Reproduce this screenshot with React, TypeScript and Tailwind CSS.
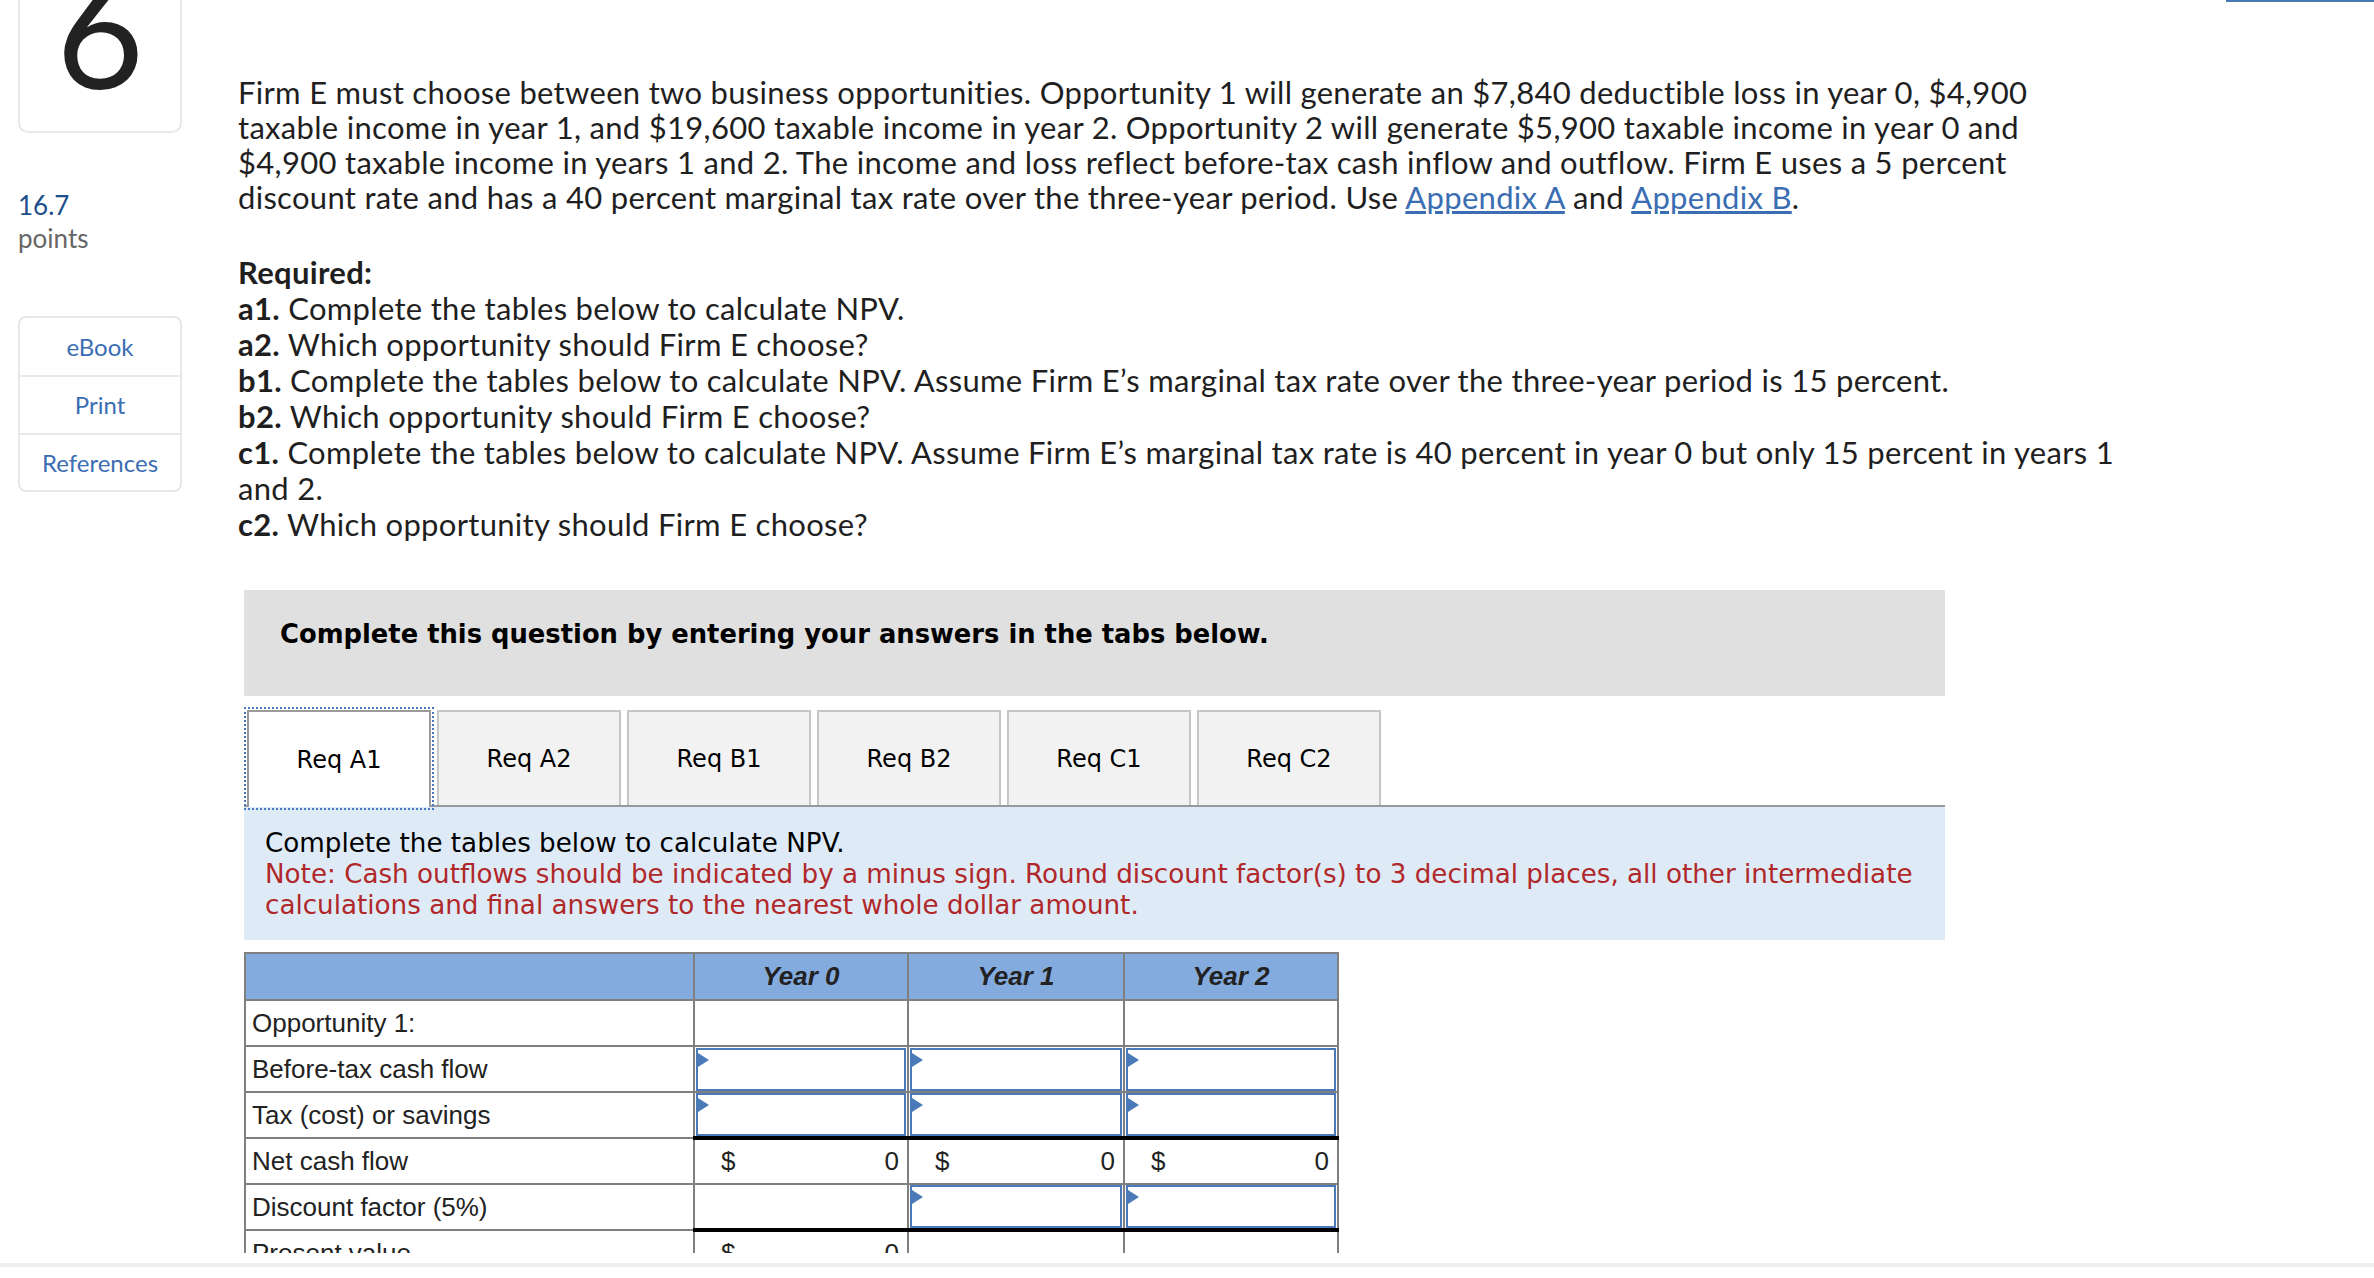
import React from 'react';

const tabs = ['Req A1', 'Req A2', 'Req B1', 'Req B2', 'Req C1', 'Req C2'];

const bodyFont = { fontFamily: 'Lato, "Open Sans", sans-serif' };
const verdana = { fontFamily: '"DejaVu Sans", Verdana, sans-serif' };
const arial = { fontFamily: '"Liberation Sans", Arial, sans-serif' };

// Blue answer box with the small flag in the corner
const InputCell = () => (
  <div className="relative h-[43px] mx-[1px] border-2 border-[#4a7ab8] bg-white">
    <div className="absolute left-0 top-[3px] w-0 h-0 border-t-[7px] border-b-[7px] border-l-[11px] border-t-transparent border-b-transparent border-l-[#4a7ab8]" />
  </div>
);

const MoneyCell = ({ value }: { value: string }) => (
  <div className="flex justify-between items-center pl-[26px] pr-[8px]">
    <span>$</span>
    <span>{value}</span>
  </div>
);

type Row = {
  label: string;
  cells: Array<'empty' | 'input' | 'money'>;
  thick?: boolean;
};

const rows: Row[] = [
  { label: 'Opportunity 1:', cells: ['empty', 'empty', 'empty'] },
  { label: 'Before-tax cash flow', cells: ['input', 'input', 'input'] },
  { label: 'Tax (cost) or savings', cells: ['input', 'input', 'input'], thick: true },
  { label: 'Net cash flow', cells: ['money', 'money', 'money'] },
  { label: 'Discount factor (5%)', cells: ['empty', 'input', 'input'], thick: true },
  { label: 'Present value', cells: ['money', 'empty', 'empty'] },
];

export default function App() {
  return (
    <div className="w-[2374px] h-[1278px] bg-white flex flex-col relative text-[#1f1f1f]" style={bodyFont}>
      <div className="absolute top-0 right-0 w-[148px] h-[2px] bg-[#4a78b5]" />

      <div className="h-[1253px] overflow-hidden flex">
        {/* Left rail */}
        <div className="w-[164px] ml-[18px] shrink-0 flex flex-col">
          <div className="h-[133px] border-2 border-t-0 border-[#e8e8e8] rounded-b-[10px] flex justify-center overflow-hidden">
            <span className="text-[152px] leading-none mt-[-46px] text-[#222]">6</span>
          </div>
          <div className="mt-[56px] text-[26px] leading-[33px] text-[#1d4f8c]">16.7</div>
          <div className="text-[26px] leading-[33px] text-[#666]">points</div>
          <div className="mt-[61px] border-2 border-[#e8e8e8] rounded-[8px] flex flex-col text-[24px] text-[#3b6db3]">
            <div className="h-[59px] flex items-center justify-center border-b-2 border-[#e8e8e8]">eBook</div>
            <div className="h-[58px] flex items-center justify-center border-b-2 border-[#e8e8e8]">Print</div>
            <div className="h-[55px] flex items-center justify-center">References</div>
          </div>
        </div>

        {/* Question */}
        <div className="ml-[56px] flex-1 flex flex-col">
          <p className="mt-[75px] text-[31px] leading-[35px] tracking-[0.3px] whitespace-nowrap">
            Firm E must choose between two business opportunities. Opportunity 1 will generate an $7,840 deductible loss in year 0, $4,900
            <br />
            taxable income in year 1, and $19,600 taxable income in year 2. Opportunity 2 will generate $5,900 taxable income in year 0 and
            <br />
            $4,900 taxable income in years 1 and 2. The income and loss reflect before-tax cash inflow and outflow. Firm E uses a 5 percent
            <br />
            discount rate and has a 40 percent marginal tax rate over the three-year period. Use{' '}
            <a className="text-[#3b6db3] underline">Appendix A</a> and{' '}
            <a className="text-[#3b6db3] underline">Appendix B</a>.
          </p>

          <div className="mt-[39px] text-[31px] leading-[36px] tracking-[0.3px] whitespace-nowrap">
            <div className="font-bold">Required:</div>
            <div><b>a1.</b> Complete the tables below to calculate NPV.</div>
            <div><b>a2.</b> Which opportunity should Firm E choose?</div>
            <div><b>b1.</b> Complete the tables below to calculate NPV. Assume Firm E’s marginal tax rate over the three-year period is 15 percent.</div>
            <div><b>b2.</b> Which opportunity should Firm E choose?</div>
            <div><b>c1.</b> Complete the tables below to calculate NPV. Assume Firm E’s marginal tax rate is 40 percent in year 0 but only 15 percent in years 1</div>
            <div>and 2.</div>
            <div><b>c2.</b> Which opportunity should Firm E choose?</div>
          </div>

          <div className="ml-[6px] w-[1701px] mt-[48px]" style={verdana}>
            <div className="h-[106px] bg-[#e0e0e0] pl-[36px] pt-[28px] text-[25.8px] leading-[32px] font-bold text-black">
              Complete this question by entering your answers in the tabs below.
            </div>

            <div className="mt-[14px] flex gap-[6px] pl-[3px] border-b-2 border-[#999]">
              {tabs.map((t, i) => (
                <div
                  key={t}
                  className={
                    i === 0
                      ? 'w-[184px] h-[97px] flex items-center justify-center text-[24px] text-black bg-white border-2 border-b-0 border-[#999] outline-2 outline-dotted outline-[#4a78c0] outline-offset-[1px] -mb-[2px]'
                      : 'w-[184px] h-[95px] flex items-center justify-center text-[24px] text-black bg-[#f2f2f2] border-2 border-b-0 border-[#c6c6c6]'
                  }
                >
                  {t}
                </div>
              ))}
            </div>

            <div className="h-[133px] bg-[#deebf7] pl-[21px] pt-[21px] text-[26.2px] leading-[31px]">
              <div className="text-black">Complete the tables below to calculate NPV.</div>
              <div className="text-[#b0282a]">
                Note: Cash outflows should be indicated by a minus sign. Round discount factor(s) to 3 decimal places, all other intermediate
                <br />
                calculations and final answers to the nearest whole dollar amount.
              </div>
            </div>

            <table className="mt-[12px] border-collapse text-[26px] text-[#222]" style={arial}>
              <thead>
                <tr className="h-[47px] bg-[#84abde]">
                  <th className="w-[449px] border-2 border-[#7f7f7f]" />
                  <th className="w-[214px] border-2 border-[#7f7f7f] font-bold italic">Year 0</th>
                  <th className="w-[216px] border-2 border-[#7f7f7f] font-bold italic">Year 1</th>
                  <th className="w-[214px] border-2 border-[#7f7f7f] font-bold italic">Year 2</th>
                </tr>
              </thead>
              <tbody>
                {rows.map((r) => (
                  <tr key={r.label} className="h-[46px]">
                    <td className="border-2 border-[#7f7f7f] pl-[6px] leading-[28px]">{r.label}</td>
                    {r.cells.map((c, i) => (
                      <td
                        key={i}
                        className={
                          r.thick
                            ? 'border-2 border-b-[4px] border-[#7f7f7f] border-b-black p-0'
                            : 'border-2 border-[#7f7f7f] p-0'
                        }
                      >
                        {c === 'input' && <InputCell />}
                        {c === 'money' && <MoneyCell value="0" />}
                      </td>
                    ))}
                  </tr>
                ))}
              </tbody>
            </table>
          </div>
        </div>
      </div>

      <div className="mt-[10px] border-t-4 border-[#efefef] flex-1" />
    </div>
  );
}
